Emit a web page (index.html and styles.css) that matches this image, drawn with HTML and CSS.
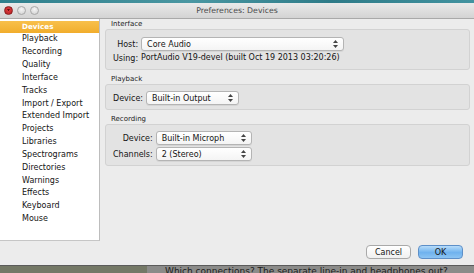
FILE: index.html
```html
<!DOCTYPE html>
<html lang="en">
<head>
  <meta charset="UTF-8">
  <title>Preferences: Devices</title>
  <link rel="stylesheet" href="styles.css">
</head>
<body>
  <div class="desk-top"></div>
  <div class="window">
    <div class="titlebar">
      <div class="lights">
        <span class="light close"></span>
        <span class="light"></span>
        <span class="light"></span>
      </div>
      <div class="title">Preferences: Devices</div>
    </div>
    <div class="window-body">
      <ul class="sidebar">
        <li class="selected">Devices</li>
        <li>Playback</li>
        <li>Recording</li>
        <li>Quality</li>
        <li>Interface</li>
        <li>Tracks</li>
        <li>Import / Export</li>
        <li>Extended Import</li>
        <li>Projects</li>
        <li>Libraries</li>
        <li>Spectrograms</li>
        <li>Directories</li>
        <li>Warnings</li>
        <li>Effects</li>
        <li>Keyboard</li>
        <li>Mouse</li>
      </ul>
      <div class="panel">
        <div class="group">
          <div class="group-title">Interface</div>
          <div class="group-box">
            <span class="lbl">Host:</span>
            <div class="select wide"><span>Core Audio</span><svg width="5" height="8" viewBox="0 0 5 8"><polygon points="2.5,0 5,3 0,3" /><polygon points="0,5 5,5 2.5,8" /></svg></div>
            <span class="lbl">Using:</span>
            <span class="val">PortAudio V19-devel (built Oct 19 2013 03:20:26)</span>
          </div>
        </div>
        <div class="group">
          <div class="group-title">Playback</div>
          <div class="group-box">
            <span class="lbl">Device:</span>
            <div class="select out"><span>Built-in Output</span><svg width="5" height="8" viewBox="0 0 5 8"><polygon points="2.5,0 5,3 0,3" /><polygon points="0,5 5,5 2.5,8" /></svg></div>
          </div>
        </div>
        <div class="group">
          <div class="group-title">Recording</div>
          <div class="group-box rec">
            <span class="lbl">Device:</span>
            <div class="select mid"><span>Built-in Microph</span><svg width="5" height="8" viewBox="0 0 5 8"><polygon points="2.5,0 5,3 0,3" /><polygon points="0,5 5,5 2.5,8" /></svg></div>
            <span class="lbl">Channels:</span>
            <div class="select mid"><span>2 (Stereo)</span><svg width="5" height="8" viewBox="0 0 5 8"><polygon points="2.5,0 5,3 0,3" /><polygon points="0,5 5,5 2.5,8" /></svg></div>
          </div>
        </div>
      </div>
    </div>
    <div class="footer">
      <button class="btn">Cancel</button>
      <button class="btn primary">OK</button>
    </div>
  </div>
  <div class="desk-bottom">
    <div class="desk-left"></div>
    <div class="desk-text">Which connections? The separate line-in and headphones out?</div>
  </div>
</body>
</html>
```

FILE: styles.css
```css
body {
  margin: 0;
  width: 474px;
  height: 273px;
  overflow: hidden;
  font-family: "DejaVu Sans", Verdana, sans-serif;
  font-size: 8px;
  color: #141414;
  background: #3a8794;
}
.desk-top {
  height: 3px;
  background: linear-gradient(90deg, #2f7f8c, #4a97a2 40%, #2e7b88 70%, #4293a0);
}
.window {
  height: 262px;
  background: #ececec;
  display: flex;
  flex-direction: column;
}
.titlebar {
  height: 15px;
  position: relative;
  background: linear-gradient(#eaeaea, #d3d3d3);
  border-bottom: 1px solid #a9a9a9;
  display: flex;
  align-items: center;
  justify-content: center;
}
.lights {
  position: absolute;
  left: 4px;
  top: 3px;
  display: flex;
  gap: 4px;
}
.light {
  width: 7px;
  height: 7px;
  border-radius: 50%;
  background: radial-gradient(circle at 50% 35%, #f4f4f4, #cfcfcf);
  border: 0.5px solid #a8a8a8;
}
.light.close {
  background: radial-gradient(circle at 50% 40%, #6a1010 18%, #d8383a 22%, #b51f22);
  border-color: #8a2020;
}
.title {
  color: #4a4a4a;
  font-size: 7.8px;
}
.window-body {
  display: flex;
  height: 221px;
}
.sidebar {
  list-style: none;
  margin: 0;
  padding: 1.5px 0 0 0;
  width: 99px;
  height: 219.5px;
  background: #fff;
  border-right: 1px solid #bdbdbd;
  border-bottom: 1px solid #c6c6c6;
}
.sidebar li {
  height: 12.85px;
  line-height: 12.85px;
  padding-left: 22px;
}
.sidebar li.selected {
  background: linear-gradient(#f8c04c, #f1ad2c);
  color: #fff;
  font-weight: bold;
  font-size: 7.2px;
}
.panel {
  flex: 1;
  padding: 0 4px 0 5px;
  display: flex;
  flex-direction: column;
  gap: 4px;
}
.group-title {
  font-size: 7px;
  line-height: 10px;
  padding-left: 6px;
  color: #222;
}
.group-box {
  background: #e3e3e3;
  border: 1px solid #d2d2d2;
  border-radius: 3px;
  padding: 6px 7px 4px 7px;
  display: grid;
  grid-template-columns: max-content max-content;
  column-gap: 3px;
  row-gap: 1px;
  align-items: center;
  justify-items: start;
}
.group:first-child .group-box {
  padding-top: 7px;
  padding-bottom: 5px;
}
.group-box.rec {
  row-gap: 2px;
}
.lbl {
  justify-self: end;
}
.val {
  line-height: 12px;
}
.select {
  height: 12px;
  display: flex;
  align-items: center;
  justify-content: space-between;
  padding: 0 5px 0 5px;
  background: linear-gradient(#ffffff, #f4f4f4);
  border: 1px solid #b4b4b4;
  border-radius: 3px;
  box-shadow: 0 1px 0 rgba(0, 0, 0, 0.06);
}
.select svg {
  fill: #444;
}
.select.wide {
  width: 191px;
}
.select.out {
  width: 81px;
}
.select.mid {
  width: 84px;
}
.footer {
  flex: 1;
  display: flex;
  justify-content: flex-end;
  gap: 7px;
  padding: 5px 11px 0 0;
}
.btn {
  width: 45px;
  height: 14px;
  padding: 0;
  font-family: inherit;
  font-size: 8px;
  color: #141414;
  background: linear-gradient(#ffffff, #f0f0f0);
  border: 1px solid #a9a9a9;
  border-radius: 4px;
}
.btn.primary {
  background: linear-gradient(#b7dcfa, #6fb2ee 55%, #8cc4f3);
  border-color: #5d8fc8;
}
.desk-bottom {
  height: 8px;
  display: flex;
  background: #8b8b89;
  border-top: 1px solid #5b5b5b;
  overflow: hidden;
}
.desk-left {
  width: 147px;
  background: #747866;
}
.desk-text {
  padding: 0 0 0 18px;
  font-size: 9px;
  line-height: 10px;
  color: #1c1c1c;
  white-space: nowrap;
}
```
